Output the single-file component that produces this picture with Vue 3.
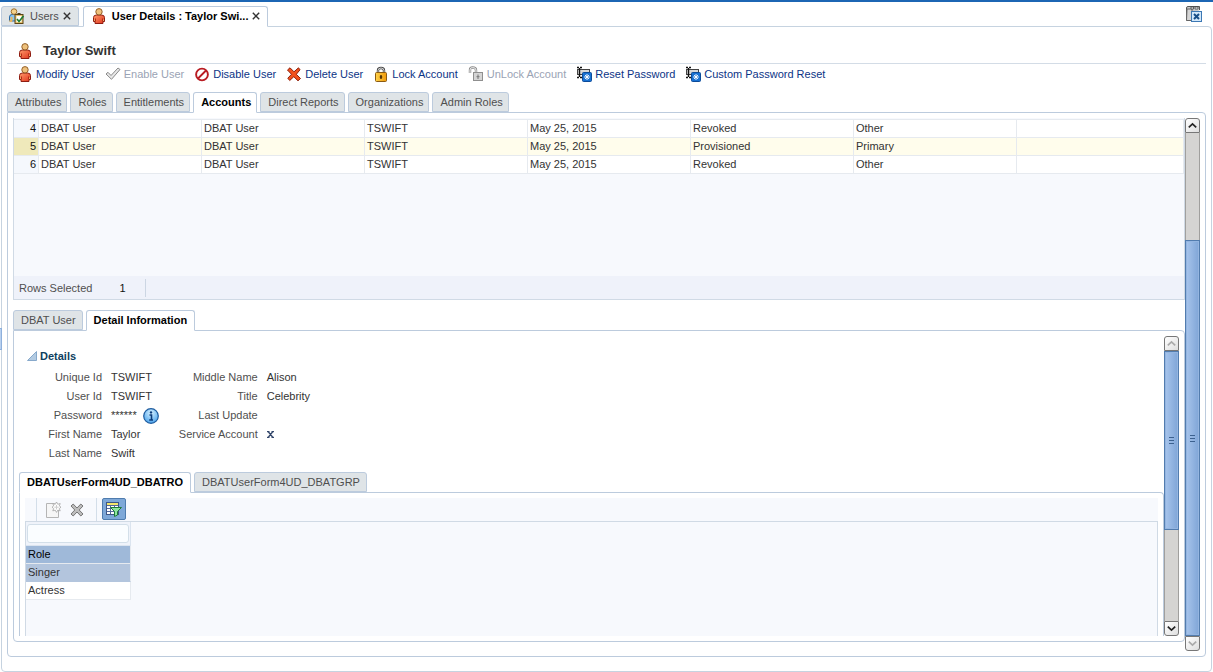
<template>
  <svg class="sprite" aria-hidden="true">
    <defs>
      <linearGradient id="shirt" x1="0" y1="0" x2="1" y2="1">
        <stop offset="0" stop-color="#ff9a6a" />
        <stop offset="1" stop-color="#e0341c" />
      </linearGradient>
      <linearGradient id="gold" x1="0" y1="0" x2="1" y2="0">
        <stop offset="0" stop-color="#ffd34a" />
        <stop offset="1" stop-color="#f09a0c" />
      </linearGradient>
      <radialGradient id="ball" cx="0.5" cy="0.3" r="0.7">
        <stop offset="0" stop-color="#d4f0ff" />
        <stop offset="1" stop-color="#4ba3ec" />
      </radialGradient>
      <symbol id="icon-user" viewBox="0 0 16 16">
        <path d="M2.500 13.500V9.500Q2.500 7 5.500 7H10.500Q13.500 7 13.500 9.500V13.500H12V15.500H4V13.500Z" fill="url(#shirt)" stroke="#8e1d12" />
        <path d="M4.500 10.500V13.500M11.500 10.500V13.500" stroke="#b52a18" />
        <path d="M3.500 11.500V13M12.500 11.500V13" stroke="#e8b56a" />
        <circle cx="8" cy="3.800" r="3.200" fill="#eec17c" stroke="#94602a" />
      </symbol>
      <symbol id="icon-users" viewBox="0 0 16 16">
        <path d="M.5 13V9Q.5 6.500 3 6.500H7Q9 6.500 9 9V13Z" fill="#8cc4ee" stroke="#2c6ba6" />
        <path d="M2.500 9V13M.5 13H3" stroke="#eab860" stroke-width="2" />
        <circle cx="5" cy="3.600" r="2.800" fill="#f5d28c" stroke="#a0702c" />
        <rect x="6" y="6.500" width="8" height="9" fill="#e5c470" stroke="#5d4416" />
        <rect x="7.500" y="8" width="5" height="6" fill="#fff" />
        <path d="M8 11L10 13.500L14.500 8" fill="none" stroke="#1c7c34" stroke-width="1.600" />
        <path d="M8.500 6H11.500" stroke="#4a3b1d" stroke-width="2" />
      </symbol>
      <symbol id="icon-check" viewBox="0 0 16 16">
        <path d="M1 8L3 6.300L6 9.500L13 2L15 3.500L6.500 13.300Z" fill="#e8e8e8" stroke="#898989" stroke-linejoin="round" />
      </symbol>
      <symbol id="icon-disable" viewBox="0 0 16 16">
        <circle cx="8" cy="8.500" r="5.900" fill="#fff" stroke="#b91c22" stroke-width="1.900" />
        <path d="M4 12.500L12 4.500" stroke="#b91c22" stroke-width="1.800" />
      </symbol>
      <symbol id="icon-delete" viewBox="0 0 16 16">
        <path d="M1.500 4L4 1.800L8 5.800L12.500 1.800L14 3.800L10.300 8.300L14.500 12.500L12 14.800L7.800 10.700L3.700 14.500L1.800 12.200L5.500 8.300Z" fill="#f2511c" stroke="#8e1f0c" stroke-linejoin="round" />
      </symbol>
      <symbol id="icon-lock" viewBox="0 0 16 16">
        <path d="M5 8V4.500Q5 2 8 2Q11 2 11 4.500V8" fill="none" stroke="#3e3e3e" stroke-width="2.400" />
        <path d="M5 8V4.500Q5 2 8 2Q11 2 11 4.500V8" fill="none" stroke="#d9d9d9" />
        <rect x="2.500" y="6.500" width="11" height="9" rx="1" fill="url(#gold)" stroke="#8b5a12" />
        <path d="M8 9V13M6.800 11H9.200" stroke="#4a2c05" stroke-width="1.400" />
      </symbol>
      <symbol id="icon-unlock" viewBox="0 0 16 16">
        <path d="M2 7V4Q2 1.500 4.500 1.500Q8 1.500 8 4V8" fill="none" stroke="#8c8c8c" stroke-width="2.400" />
        <path d="M2 7V4Q2 1.500 4.500 1.500Q8 1.500 8 4V8" fill="none" stroke="#eee" />
        <rect x="5.500" y="6.500" width="9" height="8" fill="#d5d5d5" stroke="#8f8f8f" />
        <path d="M10 8.500V13M8.500 10.700H11.500" stroke="#777" />
      </symbol>
      <symbol id="icon-reset" viewBox="0 0 16 16">
        <rect x="1.500" y="3.500" width="12" height="5" fill="#d7d7d7" stroke="#444" />
        <path d="M1 1.500H3M4 1.500H6M3.500 2V11M1 11.500H3M4 11.500H6" stroke="#111" stroke-width="1.400" />
        <rect x="6.500" y="6.500" width="9" height="9" rx="1" fill="#1871d2" stroke="#0c4b99" />
        <path d="M11 8V14M8 11H14M9 9L13 13M13 9L9 13" stroke="#fff" stroke-width=".9" />
      </symbol>
      <symbol id="icon-closetabs" viewBox="0 0 16 16">
        <path d="M.5 14.500V2Q.5.500 2 .5H13.500V4" fill="#c9c9c9" stroke="#555" />
        <path d="M.5 14.500H6V3H1Z" fill="#d6d6d6" stroke="#666" />
        <path d="M5 1H7.500V3H5ZM9 1H12V3H9Z" fill="#fff" stroke="#444" stroke-width=".8" />
        <rect x="5.500" y="5.500" width="10" height="10" fill="#d2e8fb" stroke="#3c78b4" />
        <path d="M8 8L13 13M13 8L8 13" stroke="#174e87" stroke-width="2" />
      </symbol>
      <symbol id="icon-new" viewBox="0 0 16 16">
        <path d="M1.500 1.500H9.500L13.500 5.500V15.500H1.500Z" fill="#f6f6f6" stroke="#b5b5b5" />
        <path d="M11.500 0L12.800 2.300L15.200 1.500L14.300 3.900L16 5.200L14.300 6.500L15.200 8.900L12.800 8.100L11.500 10.400L10.200 8.100L7.800 8.900L8.700 6.500L7 5.200L8.700 3.900L7.800 1.500L10.200 2.300Z" fill="#fff" stroke="#a5a5a5" stroke-width=".8" />
        <path d="M11.500 3V7.400M9.300 5.200H13.700" stroke="#ccc" />
      </symbol>
      <symbol id="icon-remove" viewBox="0 0 16 16">
        <path d="M2 4L4.200 2L8 6L11.800 2L14 4L10.200 8L14 12L11.800 14L8 10L4.200 14L2 12L5.800 8Z" fill="#bdbdbd" stroke="#777" stroke-linejoin="round" />
      </symbol>
      <symbol id="icon-filter" viewBox="0 0 16 16">
        <rect x=".5" y="1.500" width="12" height="12" fill="#fff" stroke="#3e5687" />
        <path d="M1 3H12" stroke="#f4e66b" stroke-width="2" />
        <path d="M1 4.500H12M1 7.500H12M1 10.500H12M4.500 5V13M8.500 5V13" stroke="#52689a" />
        <path d="M4.500 6.500H15.500L11.500 10.500V14L8.500 15.500V10.500Z" fill="#8ee5a0" stroke="#1e7a38" />
      </symbol>
      <symbol id="icon-info" viewBox="0 0 16 16">
        <circle cx="8" cy="8" r="7.300" fill="url(#ball)" stroke="#1e5c9f" stroke-width="1.200" />
        <circle cx="8" cy="4.400" r="1.200" fill="#0b3c7c" />
        <path d="M6.500 7H8.500V12M6.200 12H10" fill="none" stroke="#0b3c7c" stroke-width="1.600" />
      </symbol>
      <symbol id="icon-close" viewBox="0 0 8 8">
        <path d="M.8.800L7.200 7.200M7.200.800L.8 7.200" stroke="#333" stroke-width="1.400" />
      </symbol>
      <symbol id="icon-up" viewBox="0 0 8 8">
        <path d="M.7 5.700L4 2.600L7.300 5.700" fill="none" stroke="currentColor" stroke-width="1.500" />
      </symbol>
      <symbol id="icon-down" viewBox="0 0 8 8">
        <path d="M.7 2.300L4 5.400L7.300 2.300" fill="none" stroke="currentColor" stroke-width="1.500" />
      </symbol>
    </defs>
  </svg>

  <div class="page">
    <header class="window-bar">
      <nav class="tabs window-tabs">
        <div class="tab">
          <svg class="icon"><use href="#icon-users" /></svg>
          <button class="tab-label">Users</button>
          <button class="close" aria-label="Close Users"><svg><use href="#icon-close" /></svg></button>
        </div>
        <div class="tab active">
          <svg class="icon"><use href="#icon-user" /></svg>
          <button class="tab-label">User Details : Taylor Swi...</button>
          <button class="close" aria-label="Close User Details"><svg><use href="#icon-close" /></svg></button>
        </div>
      </nav>
      <button class="close-all" aria-label="Close tabs"><svg class="icon"><use href="#icon-closetabs" /></svg></button>
    </header>

    <main class="window">
      <div class="title">
        <svg class="icon"><use href="#icon-user" /></svg>
        <h1>Taylor Swift</h1>
      </div>

      <div class="actions">
        <button v-for="action in actions" :key="action.label" :disabled="action.disabled">
          <svg class="icon"><use :href="'#icon-' + action.icon" /></svg>{{ action.label }}
        </button>
      </div>

      <nav class="tabs user-tabs">
        <button v-for="tab in userTabs" :key="tab" class="tab" :class="{ active: tab === userTab }" @click="userTab = tab">{{ tab }}</button>
      </nav>

      <section class="panel user-panel">
        <div class="user-content">
          <div class="accounts">
            <table>
              <colgroup>
                <col class="col-number" />
                <col v-for="n in 6" :key="n" class="col-data" />
                <col />
              </colgroup>
              <tbody>
                <tr v-for="row in accounts" :key="row.id" :class="{ selected: row.id === selectedId }" @click="selectedId = row.id">
                  <th scope="row">{{ row.id }}</th>
                  <td v-for="(cell, i) in row.cells" :key="i">{{ cell }}</td>
                  <td></td>
                </tr>
              </tbody>
            </table>
            <footer class="status">
              <span>Rows Selected</span>
              <span class="count">1</span>
            </footer>
          </div>

          <nav class="tabs detail-tabs">
            <button v-for="tab in detailTabs" :key="tab" class="tab" :class="{ active: tab === detailTab }" @click="detailTab = tab">{{ tab }}</button>
          </nav>

          <section class="panel detail-panel">
            <div class="detail-content">
              <h2>
                <svg class="disclosure" viewBox="0 0 10 10"><path d="M.5 9.500L9.500.500V9.500Z" fill="#b3cbe2" stroke="#87a9cb" /></svg>Details
              </h2>
              <div class="form">
                <dl v-for="(fields, i) in formColumns" :key="i" :class="'form-col-' + i">
                  <template v-for="field in fields" :key="field.label">
                    <dt>{{ field.label }}</dt>
                    <dd>
                      <svg v-if="field.flag" class="flag" viewBox="0 0 7 7" role="img" aria-label="No"><path d="M0 .5H2.500M4.500.500H7M0 6.500H2.500M4.500 6.500H7M1.500 1L5.500 6M5.500 1L1.500 6" stroke="#33476b" stroke-width="1.300" /></svg>
                      <template v-else>{{ field.value }}</template>
                      <button v-if="field.info" class="info" aria-label="Information"><svg class="icon"><use href="#icon-info" /></svg></button>
                    </dd>
                  </template>
                </dl>
              </div>

              <nav class="tabs form-tabs">
                <button v-for="tab in formTabs" :key="tab" class="tab" :class="{ active: tab === formTab }" @click="formTab = tab">{{ tab }}</button>
              </nav>

              <section class="panel form-panel">
                <div class="toolbar">
                  <div class="tool-group">
                    <button aria-label="Add" disabled><svg class="icon"><use href="#icon-new" /></svg></button>
                    <button aria-label="Remove" disabled><svg class="icon"><use href="#icon-remove" /></svg></button>
                  </div>
                  <button class="pressed" aria-label="Query by example"><svg class="icon"><use href="#icon-filter" /></svg></button>
                </div>
                <div class="roles">
                  <table>
                    <thead>
                      <tr class="filter"><td><input v-model="roleFilter" type="text" aria-label="Filter Role" /></td></tr>
                      <tr><th scope="col">Role</th></tr>
                    </thead>
                    <tbody>
                      <tr v-for="role in roles" :key="role" :class="{ selected: role === 'Singer' }"><td>{{ role }}</td></tr>
                    </tbody>
                  </table>
                </div>
              </section>
            </div>

            <div class="scrollbar detail-scroll">
              <button class="up" aria-label="Scroll up" disabled><svg><use href="#icon-up" /></svg></button>
              <div class="thumb"><i></i></div>
              <div class="track"></div>
              <button class="down" aria-label="Scroll down"><svg><use href="#icon-down" /></svg></button>
            </div>
          </section>
        </div>

        <div class="scrollbar user-scroll">
          <button class="up" aria-label="Scroll up"><svg><use href="#icon-up" /></svg></button>
          <div class="track"></div>
          <div class="thumb"><i></i></div>
          <button class="down" aria-label="Scroll down" disabled><svg><use href="#icon-down" /></svg></button>
        </div>
      </section>
    </main>
    <div class="splitter"></div>
  </div>
</template>

<script setup>
import { ref, computed } from 'vue';

const actions = [
  { label: 'Modify User', icon: 'user' },
  { label: 'Enable User', icon: 'check', disabled: true },
  { label: 'Disable User', icon: 'disable' },
  { label: 'Delete User', icon: 'delete' },
  { label: 'Lock Account', icon: 'lock' },
  { label: 'UnLock Account', icon: 'unlock', disabled: true },
  { label: 'Reset Password', icon: 'reset' },
  { label: 'Custom Password Reset', icon: 'reset' }
];

const userTabs = ['Attributes', 'Roles', 'Entitlements', 'Accounts', 'Direct Reports', 'Organizations', 'Admin Roles'];
const userTab = ref('Accounts');

const detailTabs = ['DBAT User', 'Detail Information'];
const detailTab = ref('Detail Information');

const formTabs = ['DBATUserForm4UD_DBATRO', 'DBATUserForm4UD_DBATGRP'];
const formTab = ref('DBATUserForm4UD_DBATRO');

const accounts = [
  { id: 4, cells: ['DBAT User', 'DBAT User', 'TSWIFT', 'May 25, 2015', 'Revoked', 'Other'] },
  { id: 5, cells: ['DBAT User', 'DBAT User', 'TSWIFT', 'May 25, 2015', 'Provisioned', 'Primary'] },
  { id: 6, cells: ['DBAT User', 'DBAT User', 'TSWIFT', 'May 25, 2015', 'Revoked', 'Other'] }
];
const selectedId = ref(5);

const formColumns = [
  [
    { label: 'Unique Id', value: 'TSWIFT' },
    { label: 'User Id', value: 'TSWIFT' },
    { label: 'Password', value: '******', info: true },
    { label: 'First Name', value: 'Taylor' },
    { label: 'Last Name', value: 'Swift' }
  ],
  [
    { label: 'Middle Name', value: 'Alison' },
    { label: 'Title', value: 'Celebrity' },
    { label: 'Last Update', value: '' },
    { label: 'Service Account', flag: true }
  ]
];

// the filter box above the Role column narrows the rows
const roleFilter = ref('');
const roles = computed(() =>
  ['Singer', 'Actress'].filter((r) => r.toLowerCase().includes(roleFilter.value.toLowerCase()))
);
</script>

<style>
body {
  background: #fff;
}
</style>

<style scoped>
.sprite {
  position: absolute;
  width: 0;
  height: 0;
}

.page {
  position: relative;
  box-sizing: border-box;
  min-height: 100vh;
  display: flex;
  flex-direction: column;
  border-top: 2px solid #1c66b4;
  padding: 4px 1px 0 1px;
  font: 11px/18px "Liberation Sans", Arial, sans-serif;
  color: #333;
}

.page * {
  box-sizing: border-box;
}

button {
  font: inherit;
  color: inherit;
  background: none;
  border: 0;
  padding: 0;
  white-space: nowrap;
  cursor: pointer;
}

button:disabled {
  cursor: default;
}

.icon {
  display: block;
  flex: none;
  width: 16px;
  height: 16px;
}

/* tabs */
.tabs {
  display: flex;
  gap: 3px;
  position: relative;
  z-index: 1;
}

.tab {
  height: 20px;
  padding: 0 6px 0 7px;
  background: #dfe4e7;
  border: 1px solid #bccbdd;
  border-radius: 3px 3px 0 0;
  color: #4f4f4f;
}

.tab.active {
  height: 21px;
  margin-bottom: -1px;
  padding: 0 7px 1px;
  background: #fff;
  border-bottom-color: #fff;
  color: #000;
  font-weight: bold;
}

.user-tabs .tab,
.user-tabs .tab.active {
  padding-right: 5px;
}

.window-bar {
  display: flex;
  justify-content: space-between;
  height: 20px;
  padding-right: 10px;
}

.window-tabs {
  gap: 4px;
}

.window-tabs .tab {
  display: flex;
  align-items: center;
  padding-right: 7px;
}

.window-tabs .icon {
  margin-right: 5px;
}

.close {
  margin-left: 4px;
}

.close svg {
  display: block;
  width: 8px;
  height: 8px;
}

.close-all {
  align-self: flex-start;
}

.window {
  flex: 1;
  display: flex;
  flex-direction: column;
  border: 1px solid #c6d3e0;
  border-radius: 0 4px 4px 4px;
  padding: 15px 5px 14px;
}

.title {
  display: flex;
  align-items: center;
  gap: 10px;
  height: 22px;
  padding: 0 0 4px 10px;
  border-bottom: 1px solid #d3dce6;
}

h1 {
  margin: 0;
  font-size: 13px;
  color: #333;
}

.actions {
  display: flex;
  gap: 10px;
  padding: 1px 10px 9px;
}

.actions button {
  display: flex;
  align-items: center;
  gap: 3px;
  height: 18px;
  color: #0c3486;
}

.actions button:disabled {
  color: #9aa3b4;
}

.panel {
  display: flex;
  border: 1px solid #bccbdd;
  border-radius: 0 4px 4px 4px;
}

.user-panel {
  flex: 1;
  padding: 5px;
}

.user-content {
  flex: 1;
  min-width: 0;
  display: flex;
  flex-direction: column;
  padding-bottom: 9px;
}

/* accounts table */
.accounts {
  display: flex;
  flex-direction: column;
  height: 182px;
  padding-top: 1px;
  background: #f7f9fd;
  border: 1px solid #d0dae5;
  border-top: 0;
}

.accounts table {
  width: 100%;
  table-layout: fixed;
  border-collapse: separate;
  border-spacing: 0;
  background: #fff;
  border-top: 1px solid #e6eaef;
}

.col-number {
  width: 25px;
}

.col-data {
  width: 163px;
}

.accounts th,
.accounts td {
  height: 18px;
  padding: 0 2px;
  line-height: 17px;
  border-right: 1px solid #e6eaef;
  border-bottom: 1px solid #e6eaef;
}

.accounts th {
  font-weight: normal;
  text-align: right;
  background: #f5f8fd;
  color: #111;
}

.accounts .selected td {
  background: #fffdec;
}

.accounts .selected th {
  background: #efe9bb;
}

.status {
  display: flex;
  align-items: center;
  margin-top: auto;
  height: 23px;
  padding-left: 5px;
  background: #eff2fa;
  color: #4f4f4f;
}

.count {
  margin-left: 27px;
  padding-right: 19px;
  border-right: 1px solid #ccd6e3;
  color: #111;
}

.detail-tabs {
  margin-top: 10px;
}

.detail-panel {
  flex: 1;
  padding: 5px;
}

.detail-content {
  flex: 1;
  min-width: 0;
  display: flex;
  flex-direction: column;
}

h2 {
  display: flex;
  align-items: center;
  gap: 3px;
  margin: 11px 0 3px 8px;
  font-size: 11px;
  line-height: 18px;
  color: #0e3f60;
}

.disclosure {
  width: 10px;
  height: 10px;
}

.form {
  display: flex;
  height: 104px;
}

dl {
  display: grid;
  grid-template-columns: 83px auto;
  grid-auto-rows: 19px;
  column-gap: 9px;
  margin: 0;
  line-height: 19px;
}

.form-col-1 {
  grid-template-columns: 99px auto;
}

dt {
  text-align: right;
  color: #4f4f4f;
}

dd {
  display: flex;
  align-items: center;
  margin: 0;
}

.info {
  margin-left: 6px;
}

.flag {
  width: 7px;
  height: 7px;
}

.form-panel {
  flex: 1;
  flex-direction: column;
  padding: 5px 5px 0;
  border-bottom: 0;
  border-radius: 0 4px 0 0;
}

.toolbar {
  display: flex;
  height: 23px;
  padding-left: 11px;
  background: #f7f9fd;
}

.tool-group {
  display: flex;
  gap: 8px;
  width: 61px;
  padding: 3px 8px;
  border: 1px solid #d3dee9;
  border-width: 0 1px;
}

.pressed {
  width: 24px;
  height: 22px;
  margin-left: 5px;
  padding: 2px 3px;
  background: #7ea8d8;
  border: 1px solid #4f7cae;
  border-radius: 2px;
}

.roles {
  flex: 1;
  background: #f7f9fd;
  border: 1px solid #d0dae5;
  border-bottom: 0;
}

.roles table {
  width: 105px;
  border-spacing: 0;
  background: #fff;
}

.roles th,
.roles td {
  height: 18px;
  padding: 0 2px;
  line-height: 17px;
  text-align: left;
  font-weight: normal;
  border-right: 1px solid #e6eaef;
  border-bottom: 1px solid #e6eaef;
}

.roles th {
  background: #9fb9d9;
  color: #000;
}

.roles .selected td {
  background: #b3c5dd;
  border-bottom-color: #b3c5dd;
}

.roles .filter td {
  height: 24px;
  padding: 0 1px;
  background: #eff3fa;
  border-color: #dbe4ef;
}

.roles input {
  display: block;
  width: 100%;
  height: 19px;
  padding: 0 3px;
  font: inherit;
  background: #fafdff;
  border: 1px solid #d3dfe9;
  border-radius: 3px;
}

/* scrollbars */
.scrollbar {
  flex: none;
  display: flex;
  flex-direction: column;
  width: 15px;
}

.scrollbar button {
  display: flex;
  align-items: center;
  justify-content: center;
  height: 15px;
  background: linear-gradient(135deg, #fff, #dedede);
  border: 1px solid #777;
  color: #222;
}

.scrollbar button:disabled {
  color: #aaa;
}

.scrollbar svg {
  width: 9px;
  height: 9px;
}

.scrollbar .up {
  border-radius: 3px 3px 0 0;
}

.scrollbar .down {
  border-radius: 0 0 3px 3px;
}

.track {
  background: #d5d4d2;
  border: 1px solid #a09f9d;
  border-width: 0 1px;
}

.thumb {
  display: flex;
  align-items: center;
  justify-content: center;
  background: linear-gradient(90deg, #a8c5ec, #7fa5d7);
  border: 1px solid #527cae;
  box-shadow: inset 0 0 0 1px #94b5e0;
}

.thumb i {
  width: 5px;
  height: 7px;
  background: repeating-linear-gradient(#3c618f 0 1px, transparent 1px 3px);
}

.user-scroll .track {
  flex: 108;
}

.user-scroll .thumb {
  flex: 396;
}

.detail-scroll .thumb {
  flex: 178;
}

.detail-scroll .track {
  flex: 92;
}

/* handle of the collapsed left pane, drawn over the window edge */
.splitter {
  position: absolute;
  left: 0;
  top: 326px;
  width: 2px;
  height: 22px;
  background: #b9d1f0;
  border: 1px solid #8eb0dc;
  border-left: 0;
}
</style>
